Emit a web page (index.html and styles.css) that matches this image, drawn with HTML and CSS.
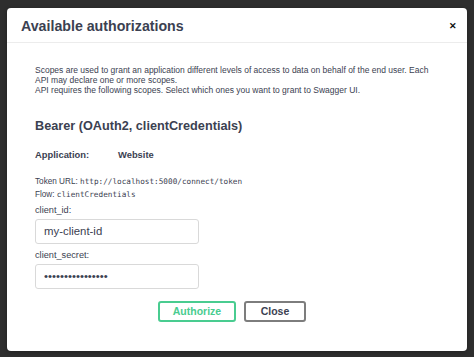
FILE: index.html
```html
<!DOCTYPE html>
<html lang="en">

<head>
    <meta charset="UTF-8">
    <meta name="viewport" content="width=device-width, initial-scale=1.0">
    <title>Available authorizations</title>
    <link rel="stylesheet" href="styles.css">
</head>

<body>
    <div class="modal">
        <!-- Header -->
        <div class="modal-header">
            <h3>Available authorizations</h3>
            <span class="close-x">&#10005;</span>
        </div>

        <div class="modal-body">
            <p class="desc">Scopes are used to grant an application different levels of access to data on behalf of the end user. Each API may declare one or more scopes.</p>
            <p class="desc">API requires the following scopes. Select which ones you want to grant to Swagger UI.</p>

            <h4>Bearer (OAuth2, clientCredentials)</h4>

            <div class="app-row">
                <span class="app-label">Application:</span>
                <span>Website</span>
            </div>

            <div class="flow-info">
                <p>Token URL: <code>http://localhost:5000/connect/token</code></p>
                <p>Flow: <code>clientCredentials</code></p>
            </div>

            <div class="form-group">
                <label for="client-id">client_id:</label>
                <input type="text" id="client-id" value="my-client-id">
            </div>
            <div class="form-group">
                <label for="client-secret">client_secret:</label>
                <input type="password" id="client-secret" value="secretsecret1234">
            </div>

            <div class="btn-wrapper">
                <button class="btn authorize">Authorize</button>
                <button class="btn done">Close</button>
            </div>
        </div>
    </div>
</body>

</html>
```

FILE: styles.css
```css
body {
    font-family: "Liberation Sans", Arial, sans-serif;
    margin: 0;
    padding: 8px 7px;
    background-color: #2e2e2e;
    color: #3b4151;
}

.modal {
    background: white;
    width: 460px;
    height: 343px;
    border-radius: 4px;
    box-shadow: 0 1px 4px rgba(0, 0, 0, 0.3);
    overflow: hidden;
}

.modal-header {
    display: flex;
    align-items: center;
    justify-content: space-between;
    box-sizing: border-box;
    height: 35px;
    padding: 1px 10px 0 14px;
    border-bottom: 1px solid #ececec;
}

.modal-header h3 {
    margin: 0;
    font-size: 14.2px;
    font-weight: bold;
}

.close-x {
    font-size: 9px;
    font-weight: bold;
    color: #111;
}

.modal-body {
    padding: 22px 28px 0;
}

.desc {
    margin: 0;
    font-size: 8.5px;
    line-height: 10.2px;
    color: #3b4151;
}

h4 {
    margin: 22px 0 0;
    font-size: 12.7px;
    line-height: 17px;
}

.app-row {
    margin-top: 13px;
    display: flex;
    font-size: 9.4px;
    font-weight: bold;
    line-height: 13px;
}

.app-label {
    width: 83px;
}

.flow-info {
    margin-top: 14px;
    font-size: 8.2px;
}

.flow-info p {
    margin: 0;
    line-height: 13px;
}

code {
    font-family: "DejaVu Sans Mono", monospace;
    font-size: 7.7px;
}

.form-group {
    margin-top: 3px;
}

.form-group + .form-group {
    margin-top: 5px;
}

label {
    display: block;
    font-size: 9.2px;
    line-height: 12px;
    margin-bottom: 3px;
}

input {
    box-sizing: border-box;
    width: 164px;
    height: 25px;
    padding: 0 8px;
    border: 1px solid #d9d9d9;
    border-radius: 3px;
    font-family: "Liberation Sans", Arial, sans-serif;
    font-size: 11.4px;
    color: #3b4151;
}

.btn-wrapper {
    display: flex;
    justify-content: center;
    margin-top: 12px;
}

.btn {
    height: 21px;
    border-radius: 3px;
    background: white;
    font-family: "Liberation Sans", Arial, sans-serif;
    font-size: 10.5px;
    font-weight: bold;
    cursor: pointer;
    padding: 0;
}

.authorize {
    width: 78px;
    border: 2px solid #49cc90;
    color: #49cc90;
    margin-right: 8px;
}

.done {
    width: 62px;
    border: 2px solid #7d7d7d;
    color: #3b4151;
    margin-right: 10px;
}
```
